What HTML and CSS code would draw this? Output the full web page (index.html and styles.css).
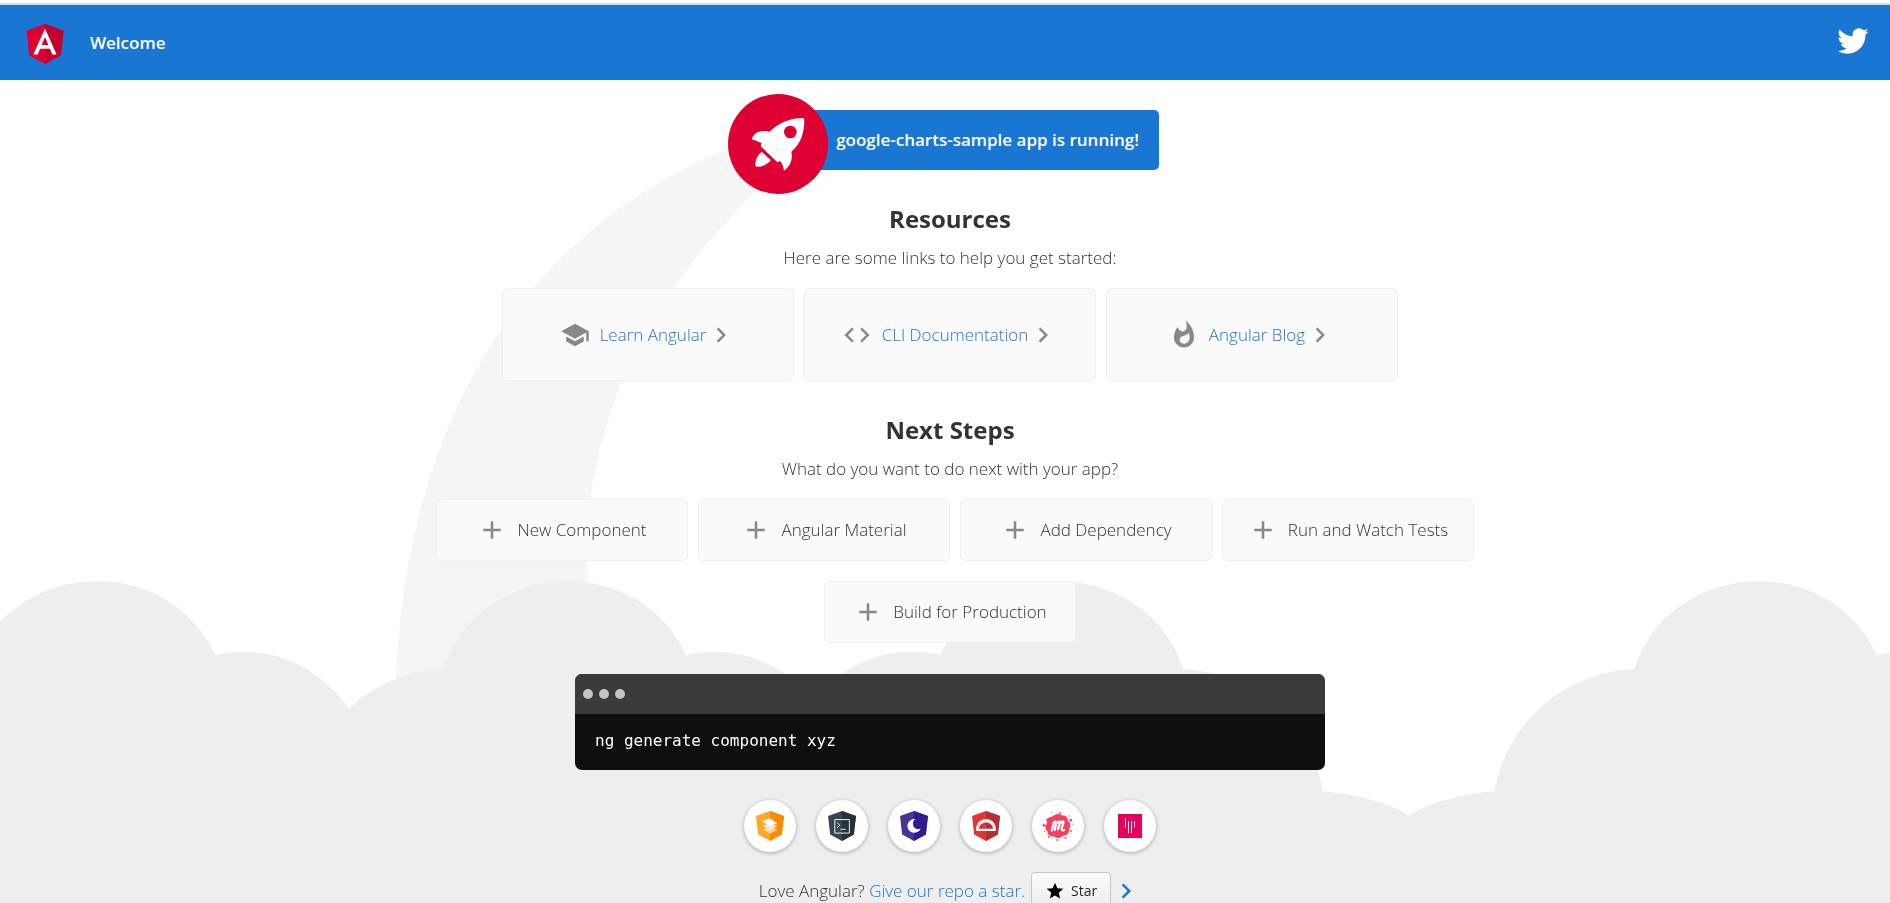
FILE: index.html
```html
<!DOCTYPE html>
<html lang="en">
<head>
<meta charset="utf-8">
<title>Welcome</title>
<link rel="stylesheet" href="styles.css">
</head>
<body>
<svg class="defs" aria-hidden="true">
  <symbol id="plus" viewBox="0 0 24 24"><path d="M19 13h-6v6h-2v-6H5v-2h6V5h2v6h6v2z"/></symbol>
  <symbol id="chevron" viewBox="0 0 24 24"><path d="M10 6L8.59 7.41 13.17 12l-4.58 4.59L10 18l6-6z"/></symbol>
  <symbol id="shield" viewBox="0 0 186 200"><path d="M93 0L0 33l14 123 79 44 79-44 14-123z"/></symbol>
  <symbol id="shield-half" viewBox="0 0 186 200"><path d="M93 0v200l79-44 14-123z"/></symbol>
</svg>

<header class="toolbar">
  <svg class="toolbar-logo" viewBox="0 0 250 250" role="img" aria-label="Angular Logo">
    <path fill="#dd0031" d="M125 30L31.900 63.200l14.200 123.100L125 230l78.900-43.700 14.200-123.100z"/>
    <path fill="#c3002f" d="M125 30v200l78.900-43.700 14.200-123.100z"/>
    <path fill="#fff" d="M125 52.100L66.800 182.600h21.700l11.700-29.200h49.400l11.700 29.200H183zm17 83.300h-34l17-40.900z"/>
  </svg>
  <span class="toolbar-title">Welcome</span>
  <a class="twitter" href="#" aria-label="Angular on twitter">
    <svg viewBox="0 0 400 400"><path d="M153.620 301.590c94.340 0 145.940-78.160 145.940-145.940 0-2.220 0-4.430-.15-6.630A104.360 104.360 0 0 0 325 122.470a102.380 102.380 0 0 1-29.460 8.070 51.470 51.470 0 0 0 22.550-28.370 102.790 102.790 0 0 1-32.570 12.450 51.340 51.340 0 0 0-87.410 46.780A145.620 145.620 0 0 1 92.400 107.810a51.330 51.330 0 0 0 15.880 68.470A50.910 50.910 0 0 1 85 169.860v.65a51.310 51.310 0 0 0 41.150 50.280 51.210 51.210 0 0 1-23.160.880 51.350 51.350 0 0 0 47.920 35.620 102.920 102.920 0 0 1-63.700 22A104.410 104.410 0 0 1 75 278.550a145.210 145.210 0 0 0 78.620 23"/></svg>
  </a>
</header>

<svg class="smoke" viewBox="0 0 516 1084" aria-hidden="true"><path transform="translate(-147 -141)" d="M644.600 141S143.020 215.537 147.049 870.207s342.774 201.755 342.774 201.755S404.659 847.213 388.815 762.200c-27.116-145.510-11.551-384.124 271.900-609.100C671.150 139.365 644.600 141 644.600 141Z"/></svg>
<svg class="clouds" viewBox="169 634 2057 350" aria-hidden="true"><path d="M2379.709 863.793c10-93-77-171-168-149-52-114-225-105-264 15-75 3-140 59-152 133-30 2.830-66.725 9.829-93.500 26.250-26.771-16.421-63.500-23.420-93.500-26.250-12-74-77-130-152-133-39-120-212-129-264-15-54.084-13.075-106.753 9.173-138.488 48.900-31.734-39.726-84.400-61.974-138.487-48.900-52-114-225-105-264 15a162.027 162.027 0 0 0-103.147 43.044c-30.633-45.365-87.100-72.091-145.206-58.044-52-114-225-105-264 15V1000H2379.709Z"/></svg>

<main class="content">
  <div class="banner">
    <svg class="rocket" viewBox="0 0 300 300" aria-hidden="true">
      <circle cx="150" cy="150" r="150" fill="#dd0031"/>
      <path fill="#fff" d="M223 72Q229 72 229 78C229 118 218 150 190 173C195 198 186 218 168 230Q165 210 156 201L148 205L98 157L101 147L94 145Q86 139 74 137Q70 134 73 131C80 113 103 107 125 113C150 88 184 72 223 72Z"/>
      <path fill="#fff" d="M101 173L129 199C116 213 102 219 86 218Q82 217 82 213C81 198 88 184 101 173Z"/>
      <circle cx="187" cy="114" r="19" fill="#dd0031"/>
    </svg>
    <span>google-charts-sample app is running!</span>
  </div>

  <h2>Resources</h2>
  <p>Here are some links to help you get started:</p>
  <div class="cards">
    <a class="card resource" href="#">
      <svg class="icon" viewBox="0 0 24 24"><path d="M5 13.180v4L12 21l7-3.820v-4L12 17l-7-3.820zM12 3L1 9l11 6 9-4.910V17h2V9L12 3z"/></svg>
      <span>Learn Angular</span>
      <svg class="icon"><use href="#chevron"/></svg>
    </a>
    <a class="card resource" href="#">
      <svg class="icon" viewBox="0 0 24 24"><path d="M9.400 16.600L4.800 12l4.600-4.600L8 6l-6 6 6 6 1.400-1.400zm5.200 0l4.600-4.600-4.600-4.600L16 6l6 6-6 6-1.400-1.400z"/></svg>
      <span>CLI Documentation</span>
      <svg class="icon"><use href="#chevron"/></svg>
    </a>
    <a class="card resource" href="#">
      <svg class="icon" viewBox="0 0 24 24"><path d="M13.500.67s.74 2.650.74 4.800c0 2.060-1.350 3.730-3.410 3.730-2.070 0-3.630-1.670-3.630-3.730l.03-.36C5.210 7.510 4 10.620 4 14c0 4.420 3.580 8 8 8s8-3.580 8-8C20 8.610 17.410 3.800 13.500.67zM11.710 19c-1.780 0-3.220-1.400-3.220-3.140 0-1.620 1.050-2.760 2.810-3.120 1.770-.36 3.600-1.210 4.620-2.580.39 1.290.59 2.650.59 4.040 0 2.650-2.150 4.800-4.800 4.800z"/></svg>
      <span>Angular Blog</span>
      <svg class="icon"><use href="#chevron"/></svg>
    </a>
  </div>

  <h2>Next Steps</h2>
  <p>What do you want to do next with your app?</p>
  <div class="cards steps">
    <button class="card step"><svg class="icon"><use href="#plus"/></svg><span>New Component</span></button>
    <button class="card step"><svg class="icon"><use href="#plus"/></svg><span>Angular Material</span></button>
    <button class="card step"><svg class="icon"><use href="#plus"/></svg><span>Add Dependency</span></button>
    <button class="card step"><svg class="icon"><use href="#plus"/></svg><span>Run and Watch Tests</span></button>
    <button class="card step"><svg class="icon"><use href="#plus"/></svg><span>Build for Production</span></button>
  </div>

  <div class="terminal">
    <div class="terminal-bar"><i></i><i></i><i></i></div>
    <pre>ng generate component xyz</pre>
  </div>

  <nav class="circles">
    <a href="#" aria-label="Angular Animations">
      <svg viewBox="0 0 186 200"><use href="#shield" fill="#ffa726"/><use href="#shield-half" fill="#fb8c00"/>
        <path fill="#fff" opacity=".55" d="M43 122l60-16 40 20-50 26z"/><path fill="#fff" opacity=".75" d="M43 98l60-16 40 20-50 26z"/><path fill="#fff" d="M39 68l52-20 50 34-48 20z"/></svg>
    </a>
    <a href="#" aria-label="Angular CLI">
      <svg viewBox="0 0 186 200"><use href="#shield" fill="#37474f"/><use href="#shield-half" fill="#263238"/>
        <path fill="none" stroke="#fff" stroke-width="6" d="M45 57h97v90H45zM60 78l18 17-18 18M83 122h35"/></svg>
    </a>
    <a href="#" aria-label="Angular Augury">
      <svg viewBox="0 0 186 200"><use href="#shield" fill="#4a3493"/><use href="#shield-half" fill="#311b92"/>
        <path fill="#fff" d="M103 54A46 46 0 1 0 138 116A32 32 0 0 1 103 54Z"/></svg>
    </a>
    <a href="#" aria-label="Angular Protractor">
      <svg viewBox="0 0 186 200"><use href="#shield" fill="#e13439"/><use href="#shield-half" fill="#b52f32"/>
        <path fill="#fff" fill-rule="evenodd" d="M28 133V118C28 81 57 54 93 54s65 27 65 64v15zM46 118h94C138 93 118 76 93 76S48 93 46 118z"/><path stroke="#e13439" stroke-width="4" d="M93 54v10M60 66l6 8M126 66l-6 8M38 95l9 5M148 95l-9 5"/></svg>
    </a>
    <a href="#" aria-label="Angular Meetup">
      <svg class="wide" viewBox="0 0 96 92">
        <g fill="#f64060"><path d="M36 13C46 7 56 8 61 14C72 12 80 20 78 29C87 36 89 48 82 56C83 68 75 76 65 75C57 84 43 85 36 78C24 80 15 72 16 63C7 56 7 44 14 39C12 27 19 18 29 18Q32 15 36 13Z"/>
        <circle cx="30" cy="4" r="2"/><circle cx="55" cy="6" r="3"/><circle cx="82" cy="15" r="2"/><circle cx="87" cy="28" r="4"/><circle cx="93" cy="40" r="2"/><circle cx="88" cy="61" r="3"/><circle cx="71" cy="83" r="3"/><circle cx="46" cy="89" r="3"/><circle cx="20" cy="79" r="3"/><circle cx="7" cy="63" r="2"/><circle cx="5" cy="44" r="4"/><circle cx="14" cy="27" r="3"/></g>
        <path fill="none" stroke="#fff" stroke-width="7" stroke-linecap="round" stroke-linejoin="round" d="M29 60L36 34Q41 30 43 36L38 58M43 38Q52 28 54 35L48 56M54 38Q63 28 65 35L59 53Q59 61 66 59"/>
      </svg>
    </a>
    <a href="#" aria-label="Angular Gitter">
      <svg class="square" viewBox="0 0 72 72"><path fill="#e8005d" d="M0 0h72v72H0z"/><path fill="#fff" d="M21 13h3v27h-3zM30 22h3v36h-3zM39 22h3v36h-3zM48 22h3v18h-3z"/></svg>
    </a>
  </nav>

  <footer>
    <span>Love Angular? <a href="#">Give our repo a star.</a></span>
    <button class="star"><svg viewBox="0 0 24 24"><path d="M12 17.270L18.180 21l-1.640-7.030L22 9.240l-7.190-.61L12 2 9.190 8.630 2 9.240l5.460 4.730L5.820 21z"/></svg>Star</button>
    <svg class="icon go"><use href="#chevron"/></svg>
  </footer>
</main>
</body>
</html>
```
FILE: styles.css
```css
* { box-sizing: border-box; }
body {
  margin: 0;
  border-top: 3px solid #fff;
  background: #fff;
  color: #333;
  font: 17px/24px "Open Sans", "Noto Sans", sans-serif;
  font-weight: 300;
}
a { color: #1976d2; text-decoration: none; }
button { font: inherit; color: inherit; cursor: pointer; }
.defs { position: absolute; width: 0; height: 0; }

.toolbar {
  display: flex;
  align-items: center;
  height: 77px;
  padding: 0 12px 0 20px;
  border-top: 2px solid #dadce0;
  background: #1976d2;
  color: #fff;
  font-weight: 600;
}
.toolbar-logo { width: 50px; height: 50px; margin-right: 20px; }
.twitter { margin-left: auto; padding-bottom: 4px; }
.twitter svg { display: block; width: 50px; height: 50px; fill: #fff; }

.smoke {
  position: absolute;
  z-index: -2;
  top: 126px;
  left: calc(50% - 550px);
  width: 426px;
  fill: #f5f5f5;
}
.clouds {
  position: fixed;
  z-index: -1;
  bottom: 0;
  left: 0;
  width: 100%;
  fill: #eee;
}

.content {
  display: flex;
  flex-direction: column;
  align-items: center;
  padding: 30px 0 30px 10px;
}
.banner {
  position: relative;
  display: flex;
  align-items: center;
  height: 60px;
  padding: 0 20px 0 95px;
  border-radius: 5px;
  background: #1976d2;
  color: #fff;
  font-weight: 600;
}
.rocket { position: absolute; top: -16px; left: -13px; width: 100px; height: 100px; }

h2 { margin: 32px 0 10px; font-size: 24px; line-height: 34px; font-weight: 700; }
p { margin: 0 0 18px; }

.cards {
  display: flex;
  flex-wrap: wrap;
  justify-content: center;
  gap: 20px 10px;
  max-width: 1160px;
}
.cards.steps { column-gap: 0; }
.card {
  display: flex;
  align-items: center;
  justify-content: center;
  border: 1px solid #eee;
  border-radius: 5px;
  background: #fafafa;
}
.resource { width: 292px; height: 93px; }
.resource .icon:first-child { margin-right: 10px; }
.step { width: 252px; height: 62px; padding: 0; }
.step:not(:last-child) { margin-left: 10px; }
.step .icon { margin-right: 10px; }
.icon { width: 30px; height: 30px; fill: #888; }

.terminal {
  width: 750px;
  max-width: 80%;
  margin-top: 31px;
  overflow: hidden;
  border-radius: 7px;
  background: #0f0f10;
  color: #fff;
}
.terminal-bar {
  display: flex;
  align-items: center;
  gap: 6px;
  height: 40px;
  padding-left: 8px;
  background: #3a3a3a;
}
.terminal-bar i { width: 10px; height: 10px; border-radius: 50%; background: #c4c4c6; }
.terminal pre {
  margin: 0;
  padding: 15px 20px 17px;
  font: 16px/24px "DejaVu Sans Mono", monospace;
}

.circles { display: flex; gap: 20px; margin-top: 30px; }
.circles a {
  display: flex;
  align-items: center;
  justify-content: center;
  width: 52px;
  height: 52px;
  border-radius: 50%;
  background: #fff;
  box-shadow: 0 1px 4px rgba(0, 0, 0, .3);
}
.circles svg { width: 28px; height: 30px; }
.circles .wide { width: 32px; }
.circles .square { width: 24px; height: 24px; }

footer { display: flex; align-items: center; margin-top: 20px; }
.star {
  display: flex;
  align-items: center;
  gap: 6px;
  height: 38px;
  margin-left: 6px;
  padding: 0 13px;
  border: 1px solid #c5c9cd;
  border-radius: 4px;
  background: linear-gradient(#fafbfc, #e9eef2);
  color: #24292e;
  font-size: 14px;
  font-weight: 400;
}
.star svg { width: 20px; height: 20px; fill: #000; }
.icon.go { fill: #1976d2; }
```
